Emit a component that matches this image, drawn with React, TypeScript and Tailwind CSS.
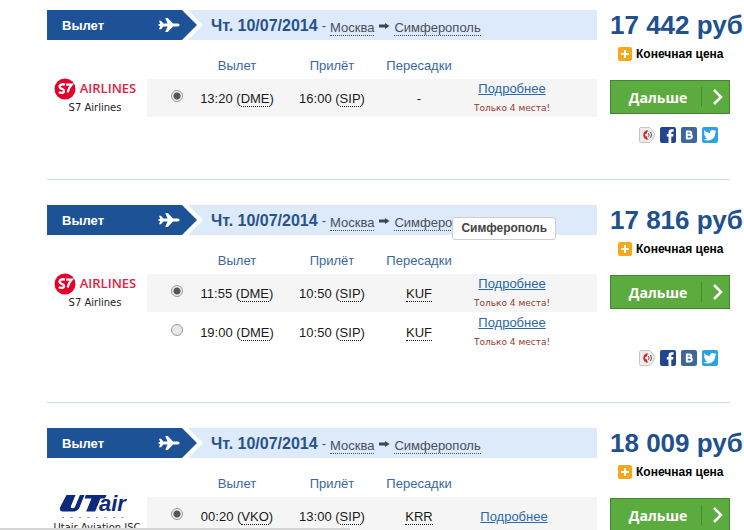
import { Fragment, type ReactNode } from 'react';
import clsx from 'clsx';

interface Flight {
  departure: string;
  from: string;
  arrival: string;
  to: string;
  transfer?: string;
  seatsLeft?: number;
}

interface Offer {
  id: string;
  airline: 's7' | 'utair';
  price: string;
  flights: Flight[];
  tooltip?: string;
}

const OFFERS: Offer[] = [
  {
    id: 'offer-1',
    airline: 's7',
    price: '17 442 руб',
    flights: [{ departure: '13:20', from: 'DME', arrival: '16:00', to: 'SIP', seatsLeft: 4 }],
  },
  {
    id: 'offer-2',
    airline: 's7',
    price: '17 816 руб',
    tooltip: 'Симферополь',
    flights: [
      { departure: '11:55', from: 'DME', arrival: '10:50', to: 'SIP', transfer: 'KUF', seatsLeft: 4 },
      { departure: '19:00', from: 'DME', arrival: '10:50', to: 'SIP', transfer: 'KUF', seatsLeft: 4 },
    ],
  },
  {
    id: 'offer-3',
    airline: 'utair',
    price: '18 009 руб',
    flights: [{ departure: '00:20', from: 'VKO', arrival: '13:00', to: 'SIP', transfer: 'KRR' }],
  },
];

function Dotted({ children }: { children: ReactNode }) {
  return <span className="inline-block border-b border-dotted border-current leading-[14px]">{children}</span>;
}

function PlaneIcon() {
  return (
    <svg viewBox="0 0 22 14" className="h-3.5 w-[22px]" fill="#fff" aria-hidden="true">
      <path d="M1 2.800h2l2.400 2.700h4.200L7.200 0h2.600l5.200 5.500h3.800c1.800 0 2.900.7 2.900 1.500s-1.100 1.500-2.900 1.500H15L9.800 14H7.200l2.400-5.500H5.400L3 11.200H1l1.200-3.300H.6V6.100h1.600z" />
    </svg>
  );
}

function S7Logo() {
  return (
    <div className="flex h-[22px] items-center gap-1">
      <svg viewBox="0 0 22 22" className="size-[22px]" aria-label="S7" role="img">
        <circle cx="11" cy="11" r="10.500" fill="#e5002b" />
        <path d="M11 6.600c-3-.9-5.500.1-5.500 2.100 0 2.400 4.600 1.900 4.600 4.200 0 2-2.600 2.500-5.300 1.400" fill="none" stroke="#fff" strokeWidth="2.300" />
        <path d="M12.200 6.700h5.400c-1.900 2-3.200 4.300-3.900 7.800" fill="none" stroke="#fff" strokeWidth="2.200" />
      </svg>
      <span className="font-['Open_Sans',sans-serif] text-[13px] font-semibold text-[#e5213f]">AIRLINES</span>
    </div>
  );
}

function UtairLogo() {
  return (
    <svg viewBox="0 0 78 26" className="h-[26px] w-[78px]" aria-label="UTair" role="img">
      <g fill="#0b2a7c">
        <path d="M8.500 1h9l-4.500 11c-.6 1.500 0 2.200 1.500 2.200s2.300-.7 2.900-2.200L21.900 1h4.600l-4.800 12c-1.300 3.200-3.600 4.600-7.800 4.600H6.400c-4.200 0-5.400-1.700-4.100-4.800z" />
        <path d="M27.900 1h20.600l-1.500 3.500h-4.500l-5.400 13.100h-9l5.400-13.100h-7z" />
      </g>
      <text x="41" y="17" fill="#0b2a7c" className="font-['Liberation_Sans',sans-serif] text-[22px] font-bold italic">air</text>
      <path d="M4 23.500h64" stroke="#8c93ad" strokeDasharray="2 6.500" />
    </svg>
  );
}

function SocialLinks() {
  return (
    <div className="flex h-4 justify-end gap-[5px] pr-3">
      <a href="#share" aria-label="Поделиться">
        <svg viewBox="0 0 16 16" className="size-4">
          <path d="M1.500.5h9c1 0 5 6 5 7.500s-4 7.500-5 7.500h-9l-1-1v-13z" fill="#ececec" stroke="#c4c4c4" />
          <path d="M9 3.200a4.800 4.800 0 1 0 0 9.600L7.200 8z" fill="#cf2a2e" />
          <circle cx="7.500" cy="8" r="1.300" fill="#fff" />
          <path d="M9.500 6.200q1.300 1.800 0 3.600M11.500 5q2 3 0 6" fill="none" stroke="#7a4a4a" />
        </svg>
      </a>
      <a href="#facebook" aria-label="Facebook">
        <svg viewBox="0 0 16 16" className="size-4">
          <rect width="16" height="16" rx="2" fill="#21458f" />
          <path d="M8.500 16V9.500H6.800V7h1.700V5.500C8.500 3.400 9.700 2.300 11.600 2.300h2v2.400h-1.300c-.8 0-1 .4-1 1.100V7h2.200l-.3 2.500h-1.900V16z" fill="#fff" />
        </svg>
      </a>
      <a href="#vk" aria-label="ВКонтакте">
        <svg viewBox="0 0 16 16" className="size-4">
          <rect width="16" height="16" rx="2" fill="#3b679a" />
          <path d="M5.800 4.500v7M5 4.500h3.300c2.700 0 2.700 3.200 0 3.200H6M8.300 7.700c3.500 0 3.500 3.800 0 3.800H5" fill="none" stroke="#fff" strokeWidth="1.900" />
        </svg>
      </a>
      <a href="#twitter" aria-label="Twitter">
        <svg viewBox="0 0 16 16" className="size-4">
          <rect width="16" height="16" rx="2" fill="#2ba3df" />
          <path d="M14.500 4.200l-1.500.4c.6-.3.900-.8 1.100-1.400l-1.700.6c-1.800-1.800-4.700-.4-4.300 2.300C5.800 6 3.900 5 2.400 3.300c-.8 1.300-.4 2.900.8 3.700l-1.200-.3c0 1.300.9 2.300 2.100 2.600l-1.100.1c.3 1 1.300 1.700 2.400 1.800-1.100.9-2.500 1.200-4 1.100 5.500 3.400 12.200-.2 11.900-6.700z" fill="#fff" />
        </svg>
      </a>
    </div>
  );
}

function RouteBanner({ tooltip }: { tooltip?: string }) {
  return (
    <div className="flex h-[30px] items-center bg-[#dceaf9]">
      <div className="flex h-full w-[156px] shrink-0 bg-white [clip-path:polygon(0_0,141px_0,156px_50%,141px_100%,0_100%)]">
        <div className="flex h-full w-[150px] items-center justify-between bg-[#1d5396] pr-[17px] pl-[15px] [clip-path:polygon(0_0,135px_0,150px_50%,135px_100%,0_100%)]">
          <span className="pt-0.5 text-[13px] font-bold text-white">Вылет</span>
          <PlaneIcon />
        </div>
      </div>
      <div className="flex items-center gap-1 pt-0.5 pl-2 text-[13px] text-[#4a4f5c]">
        <strong className="text-[16px] text-[#29528c]">Чт. 10/07/2014</strong>
        <span>-</span>
        <span className="pt-1"><Dotted>Москва</Dotted></span>
        <svg viewBox="0 0 12 8" className="h-2 w-3" aria-label="→">
          <path d="M1 2.500h6V1l4.500 3L7 7V5.500H1z" fill="#3f4450" />
        </svg>
        <span className="relative pt-1">
          <Dotted>Симферополь</Dotted>
          {tooltip && (
            <span role="tooltip" className="absolute top-2 left-[58px] z-10 rounded-[3px] border border-[#ccc] bg-white/95 px-2 text-[12px] leading-[21px] font-bold text-[#444]">
              {tooltip}
            </span>
          )}
        </span>
      </div>
    </div>
  );
}

function FlightTable({ offer }: { offer: Offer }) {
  return (
    <table className="w-full table-fixed border-collapse text-center text-[13px]">
      <colgroup>
        <col className="w-[42px]" />
        <col className="w-24" />
        <col className="w-[94px]" />
        <col className="w-20" />
        <col />
      </colgroup>
      <thead>
        <tr className="h-[39px] text-[#3a679f]">
          <td />
          <th className="pt-3 font-normal">Вылет</th>
          <th className="pt-3 font-normal">Прилёт</th>
          <th className="pt-3 font-normal">Пересадки</th>
          <td />
        </tr>
      </thead>
      <tbody>
        {offer.flights.map((flight, i) => (
          <Fragment key={flight.departure}>
            {i > 0 && <tr className="h-px"><td colSpan={5} /></tr>}
            <tr className={clsx('align-top text-[#1a1a1a]', i === 0 ? 'h-[38px] bg-[#f5f5f5]' : 'h-[37px]')}>
              <td className="pt-[11px] pl-6">
                <input
                  type="radio"
                  name={offer.id}
                  defaultChecked={i === 0}
                  aria-label={`${flight.departure} ${flight.from}`}
                  className="block size-3 appearance-none rounded-full border border-[#999] bg-[#e8e8e8] checked:bg-[radial-gradient(circle,#555_0_3px,#eee_4px)]"
                />
              </td>
              <td className="pt-3 leading-[15px]">{flight.departure} (<Dotted>{flight.from}</Dotted>)</td>
              <td className="pt-3 leading-[15px]">{flight.arrival} (<Dotted>{flight.to}</Dotted>)</td>
              <td className="pt-3 leading-[15px]">{flight.transfer ? <Dotted>{flight.transfer}</Dotted> : '-'}</td>
              <td className={clsx(flight.seatsLeft ? 'pt-0.5 pr-8' : 'pt-3 pr-7')}>
                <a href="#details" className="block leading-[15px] text-[#2a68a8] underline">Подробнее</a>
                {flight.seatsLeft && (
                  <span className="block pt-1.5 font-['DejaVu_Sans',sans-serif] text-[9px] leading-3 text-[#963a30]">
                    Только {flight.seatsLeft} места!
                  </span>
                )}
              </td>
            </tr>
          </Fragment>
        ))}
      </tbody>
    </table>
  );
}

function OfferCard({ offer }: { offer: Offer }) {
  const isS7 = offer.airline === 's7';

  return (
    <article className="mb-[25px] border-b border-[#c5dbee] pb-9">
      <div className="flex gap-[13px]">
        <div className="min-w-0 flex-1">
          <RouteBanner tooltip={offer.tooltip} />
          <div className="flex">
            <div className={clsx('flex w-[100px] shrink-0 flex-col items-center gap-0.5', isS7 ? 'pr-1 pt-[38px]' : 'pt-9')}>
              {isS7 ? <S7Logo /> : <UtairLogo />}
              <span className="font-['DejaVu_Sans',sans-serif] text-[10px] leading-3 whitespace-nowrap text-[#222]">
                {isS7 ? 'S7 Airlines' : 'Utair Aviation JSC'}
              </span>
            </div>
            <div className="min-w-0 flex-1">
              <FlightTable offer={offer} />
            </div>
          </div>
        </div>
        <aside className="w-[120px] shrink-0 pb-[13px]">
          <p className="text-[26px] leading-[30px] font-bold whitespace-nowrap text-[#21508f]">{offer.price}</p>
          <p className="flex items-center gap-1 pt-1.5 pl-2 text-[12px] leading-4 font-bold whitespace-nowrap">
            <svg viewBox="0 0 14 14" className="size-3.5" aria-hidden="true">
              <rect width="14" height="14" rx="2" fill="#f5a81c" />
              <path d="M7 3v8M3 7h8" stroke="#fff" strokeWidth="2" />
            </svg>
            Конечная цена
          </p>
          <button
            type="button"
            className="mt-[18px] flex h-[34px] w-full items-center border border-[#44862f] bg-[#5cab3f] font-['Open_Sans',sans-serif] text-[14px] font-bold text-white"
          >
            <span className="flex-1 pl-1 text-center">Дальше</span>
            <span className="flex h-5 w-7 items-center justify-center border-l border-[#468c2f] pl-1">
              <svg viewBox="0 0 10 16" className="h-4 w-2.5" fill="none" stroke="#fff" strokeWidth="2.500" aria-hidden="true">
                <path d="M1 1l7 7-7 7" />
              </svg>
            </span>
          </button>
        </aside>
      </div>
      <SocialLinks />
    </article>
  );
}

export default function App() {
  return (
    <main className="h-screen overflow-hidden bg-white pt-2.5 pr-3.5 pl-[47px] font-['Liberation_Sans',Arial,sans-serif] text-black">
      {OFFERS.map((offer) => (
        <OfferCard key={offer.id} offer={offer} />
      ))}
      <div className="fixed bottom-0 left-0 h-0.5 w-[47%] bg-[#d6d6d6]" />
    </main>
  );
}
